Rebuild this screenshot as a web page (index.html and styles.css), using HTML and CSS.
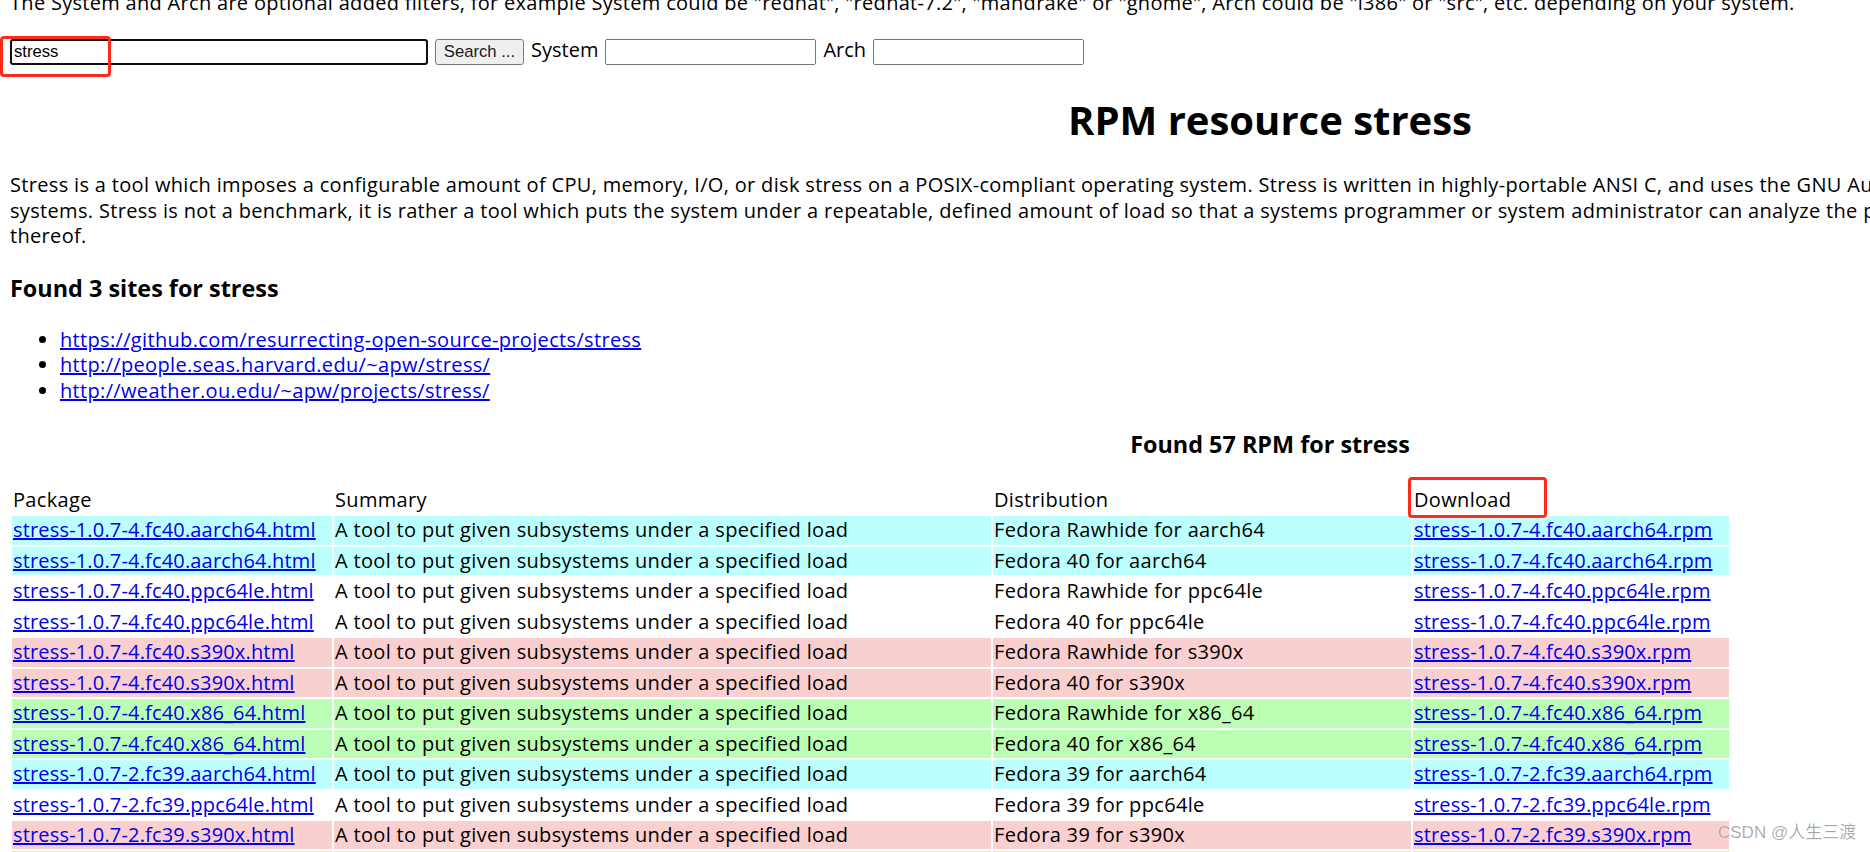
FILE: index.html
```html
<!DOCTYPE html>
<html lang="en">
<head>
<meta charset="utf-8">
<title>RPM resource stress</title>
<link rel="stylesheet" href="styles.css">
</head>
<body>
<div class="page">
  <p class="note">The System and Arch are optional added filters, for example System could be "redhat", "redhat-7.2", "mandrake" or "gnome", Arch could be "i386" or "src", etc. depending on your system.</p>
  <form class="search">
    <input class="field query" type="text" value="stress">
    <button class="btn" type="button">Search ...</button>
    <span class="label">System</span>
    <input class="field filter" type="text">
    <span class="label">Arch</span>
    <input class="field filter" type="text">
  </form>
  <h1 class="title">RPM resource stress</h1>
  <p class="desc">Stress is a tool which imposes a configurable amount of CPU, memory, I/O, or disk stress on a POSIX-compliant operating system. Stress is written in highly-portable ANSI C, and uses the GNU Autotools to compile on a great number of UNIX-like operating systems. Stress is not a benchmark, it is rather a tool which puts the system under a repeatable, defined amount of load so that a systems programmer or system administrator can analyze the performance characteristics of the system or specific components thereof.</p>
  <h3 class="sub">Found 3 sites for stress</h3>
  <ul class="sites">
    <li><a href="#">https://github.com/resurrecting-open-source-projects/stress</a></li>
    <li><a href="#">http://people.seas.harvard.edu/~apw/stress/</a></li>
    <li><a href="#">http://weather.ou.edu/~apw/projects/stress/</a></li>
  </ul>
  <h3 class="sub sub-center">Found 57 RPM for stress</h3>
  <table class="rpms">
    <colgroup>
      <col class="c-pkg"><col class="c-sum"><col class="c-dist"><col class="c-dl">
    </colgroup>
    <thead>
      <tr><th>Package</th><th>Summary</th><th>Distribution</th><th>Download</th></tr>
    </thead>
    <tbody>
      <tr class="cyan"><td><a href="#">stress-1.0.7-4.fc40.aarch64.html</a></td><td>A tool to put given subsystems under a specified load</td><td>Fedora Rawhide for aarch64</td><td><a href="#">stress-1.0.7-4.fc40.aarch64.rpm</a></td></tr>
      <tr class="cyan"><td><a href="#">stress-1.0.7-4.fc40.aarch64.html</a></td><td>A tool to put given subsystems under a specified load</td><td>Fedora 40 for aarch64</td><td><a href="#">stress-1.0.7-4.fc40.aarch64.rpm</a></td></tr>
      <tr><td><a href="#">stress-1.0.7-4.fc40.ppc64le.html</a></td><td>A tool to put given subsystems under a specified load</td><td>Fedora Rawhide for ppc64le</td><td><a href="#">stress-1.0.7-4.fc40.ppc64le.rpm</a></td></tr>
      <tr><td><a href="#">stress-1.0.7-4.fc40.ppc64le.html</a></td><td>A tool to put given subsystems under a specified load</td><td>Fedora 40 for ppc64le</td><td><a href="#">stress-1.0.7-4.fc40.ppc64le.rpm</a></td></tr>
      <tr class="pink"><td><a href="#">stress-1.0.7-4.fc40.s390x.html</a></td><td>A tool to put given subsystems under a specified load</td><td>Fedora Rawhide for s390x</td><td><a href="#">stress-1.0.7-4.fc40.s390x.rpm</a></td></tr>
      <tr class="pink"><td><a href="#">stress-1.0.7-4.fc40.s390x.html</a></td><td>A tool to put given subsystems under a specified load</td><td>Fedora 40 for s390x</td><td><a href="#">stress-1.0.7-4.fc40.s390x.rpm</a></td></tr>
      <tr class="green"><td><a href="#">stress-1.0.7-4.fc40.x86_64.html</a></td><td>A tool to put given subsystems under a specified load</td><td>Fedora Rawhide for x86_64</td><td><a href="#">stress-1.0.7-4.fc40.x86_64.rpm</a></td></tr>
      <tr class="green"><td><a href="#">stress-1.0.7-4.fc40.x86_64.html</a></td><td>A tool to put given subsystems under a specified load</td><td>Fedora 40 for x86_64</td><td><a href="#">stress-1.0.7-4.fc40.x86_64.rpm</a></td></tr>
      <tr class="cyan"><td><a href="#">stress-1.0.7-2.fc39.aarch64.html</a></td><td>A tool to put given subsystems under a specified load</td><td>Fedora 39 for aarch64</td><td><a href="#">stress-1.0.7-2.fc39.aarch64.rpm</a></td></tr>
      <tr><td><a href="#">stress-1.0.7-2.fc39.ppc64le.html</a></td><td>A tool to put given subsystems under a specified load</td><td>Fedora 39 for ppc64le</td><td><a href="#">stress-1.0.7-2.fc39.ppc64le.rpm</a></td></tr>
      <tr class="pink"><td><a href="#">stress-1.0.7-2.fc39.s390x.html</a></td><td>A tool to put given subsystems under a specified load</td><td>Fedora 39 for s390x</td><td><a href="#">stress-1.0.7-2.fc39.s390x.rpm</a></td></tr>
      <tr class="green"><td><a href="#">stress-1.0.7-2.fc39.x86_64.html</a></td><td>A tool to put given subsystems under a specified load</td><td>Fedora 39 for x86_64</td><td><a href="#">stress-1.0.7-2.fc39.x86_64.rpm</a></td></tr>
      <tr class="cyan"><td><a href="#">stress-1.0.7-1.fc38.aarch64.html</a></td><td>A tool to put given subsystems under a specified load</td><td>Fedora 38 for aarch64</td><td><a href="#">stress-1.0.7-1.fc38.aarch64.rpm</a></td></tr>
      <tr><td><a href="#">stress-1.0.7-1.fc38.ppc64le.html</a></td><td>A tool to put given subsystems under a specified load</td><td>Fedora 38 for ppc64le</td><td><a href="#">stress-1.0.7-1.fc38.ppc64le.rpm</a></td></tr>
    </tbody>
  </table>
</div>
<span class="mark mark-query"></span>
<span class="mark mark-download"></span>
<div class="watermark">CSDN @人生三渡</div>
</body>
</html>
```
FILE: styles.css
```css
html, body {
  margin: 0;
  padding: 0;
}

body {
  position: relative;
  height: 852px;
  overflow: hidden;
  background: #ffffff;
  color: #000000;
  font-family: "Open Sans", "Noto Sans", sans-serif;
  font-size: 20px;
  line-height: 25.6px;
  letter-spacing: 0.33px;
}

.page {
  display: flow-root;
  width: 2520px;
  padding: 0 10px;
}

.note {
  margin: -9.6px 0 0;
  letter-spacing: 0.3px;
}

/* search form */
.search {
  display: flex;
  align-items: baseline;
  gap: 7px;
  margin: 21px 0 0;
}

.field {
  box-sizing: border-box;
  height: 26px;
  margin: 0;
  padding: 1px 3px;
  font-family: "Liberation Sans", Arial, sans-serif;
  font-size: 16.67px;
  letter-spacing: 0;
  color: #000;
  background: #fff;
}

.query {
  width: 418px;
  border: 2px solid #101010;
  border-radius: 3px;
  padding: 0 2px;
  outline: none;
}

.filter {
  width: 211px;
  border: 1px solid #767676;
  border-radius: 2px;
}

.btn {
  box-sizing: border-box;
  width: 89px;
  height: 26px;
  margin: 0;
  padding: 0 6px;
  border: 1px solid #767676;
  border-radius: 3px;
  background: #efefef;
  color: #1a1a1a;
  font-family: "Liberation Sans", Arial, sans-serif;
  font-size: 16.67px;
  letter-spacing: 0;
}

.label {
  line-height: 25.6px;
  letter-spacing: 0;
}

/* headings & text */
.title {
  margin: 29.5px 0 0;
  font-size: 40px;
  line-height: 50px;
  font-weight: 700;
  letter-spacing: 0;
  text-align: center;
}

.desc {
  margin: 27.6px 0 0;
}

.sub {
  margin: 24.3px 0 0;
  font-size: 23.4px;
  line-height: 30px;
  font-weight: 700;
  letter-spacing: 0;
}

.sub-center {
  margin-top: 25.2px;
  text-align: center;
}

.sites {
  margin: 23.5px 0 0;
  padding-left: 50px;
  line-height: 25.7px;
}

a {
  color: #0000ee;
  text-decoration: underline;
}

/* table */
.rpms {
  margin-top: 25px;
  table-layout: fixed;
  width: 1721px;
  border-spacing: 2px;
  font-size: 20px;
}

.c-pkg { width: 320px; }
.c-sum { width: 657px; }
.c-dist { width: 418px; }
.c-dl { width: 316px; }

.rpms th,
.rpms td {
  padding: 1px;
  line-height: 26.45px;
  font-weight: 400;
  text-align: left;
  white-space: nowrap;
}

.rpms a {
  letter-spacing: 0.17px;
}

.cyan td { background: #bbffff; }
.pink td { background: #facfcf; }
.green td { background: #bbffb4; }

/* annotation overlays */
.mark {
  position: absolute;
  box-sizing: border-box;
  border: 3.5px solid #fe2a1c;
  border-radius: 4px;
}

.mark-query {
  left: 0;
  top: 36px;
  width: 111px;
  height: 41px;
}

.mark-download {
  left: 1408px;
  top: 477px;
  width: 139px;
  height: 41px;
}

.watermark {
  position: absolute;
  left: 1718px;
  top: 823px;
  font-family: "Liberation Sans", "Noto Sans CJK SC", sans-serif;
  font-size: 17px;
  line-height: 20px;
  letter-spacing: 0;
  color: rgba(0, 0, 0, 0.34);
  text-shadow: 0 0 1px #ffffff;
  white-space: nowrap;
}
```
